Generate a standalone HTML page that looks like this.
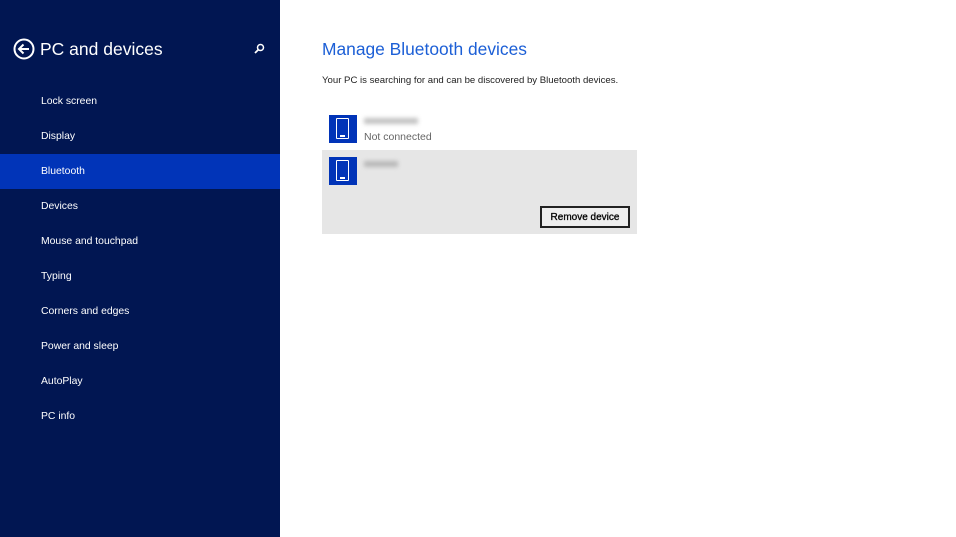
<!DOCTYPE html>
<html><head><meta charset="utf-8"><style>
body{margin:0;width:956px;height:537px;overflow:hidden;background:#fff;font-family:"Liberation Sans",sans-serif;position:relative}
#side{position:absolute;left:0;top:0;width:280px;height:537px;background:#011652}
.t{position:absolute;left:40px;top:39px;color:#fff;font-size:17.5px}
.it{position:absolute;left:0;width:280px;height:35px;color:#fff;font-size:10.4px;line-height:36px;padding-left:41px;box-sizing:border-box}
.sel{background:#0134b8}
h1{position:absolute;left:322px;top:39px;margin:0;font-weight:normal;font-size:17.4px;color:#1c5fd6}
.p{position:absolute;left:322px;top:75px;font-size:9.6px;color:#222}
.ic{position:absolute;left:329px;width:28px;height:28px;background:#0134b8}
.ic div{position:absolute;left:7px;top:3px;width:11px;height:19px;border:1.5px solid #fff;border-radius:1px}
.ic div:after{content:"";position:absolute;left:3px;bottom:1.5px;width:5px;height:2px;background:#fff}
.bl{position:absolute;height:6px;background:#999;filter:blur(2px);opacity:.6}
</style></head><body>
<div id="side">
<svg style="position:absolute;left:13px;top:38px" width="22" height="22" viewBox="0 0 22 22"><circle cx="11" cy="11" r="9.5" fill="none" stroke="#fff" stroke-width="2"/><path d="M16 11H6.5M10.5 6.5L6 11l4.5 4.5" fill="none" stroke="#fff" stroke-width="2"/></svg>
<div class="t">PC and devices</div>
<svg style="position:absolute;left:254px;top:43px" width="11" height="11" viewBox="0 0 11 11"><circle cx="6.5" cy="4.5" r="3" fill="none" stroke="#fff" stroke-width="1.5"/><path d="M4.5 6.5L1 10" stroke="#fff" stroke-width="1.8"/></svg>
<div class="it" style="top:84px">Lock screen</div>
<div class="it" style="top:119px">Display</div>
<div class="it sel" style="top:154px">Bluetooth</div>
<div class="it" style="top:189px">Devices</div>
<div class="it" style="top:224px">Mouse and touchpad</div>
<div class="it" style="top:259px">Typing</div>
<div class="it" style="top:294px">Corners and edges</div>
<div class="it" style="top:329px">Power and sleep</div>
<div class="it" style="top:364px">AutoPlay</div>
<div class="it" style="top:399px">PC info</div>
</div>
<h1>Manage Bluetooth devices</h1>
<div class="p">Your PC is searching for and can be discovered by Bluetooth devices.</div>
<div class="ic" style="top:115px"><div></div></div>
<div class="bl" style="left:364px;top:118px;width:54px"></div>
<div style="position:absolute;left:364px;top:131px;font-size:10.5px;color:#666">Not connected</div>
<div style="position:absolute;left:322px;top:150px;width:315px;height:84px;background:#e6e6e6"></div>
<div class="ic" style="top:157px"><div></div></div>
<div class="bl" style="left:364px;top:161px;width:34px"></div>
<div style="position:absolute;left:540px;top:206px;width:86px;height:18px;border:2px solid #222;background:#eee;font-size:10px;line-height:19px;text-align:center;color:#000;-webkit-text-stroke:0.3px #000">Remove device</div>
</body></html>
